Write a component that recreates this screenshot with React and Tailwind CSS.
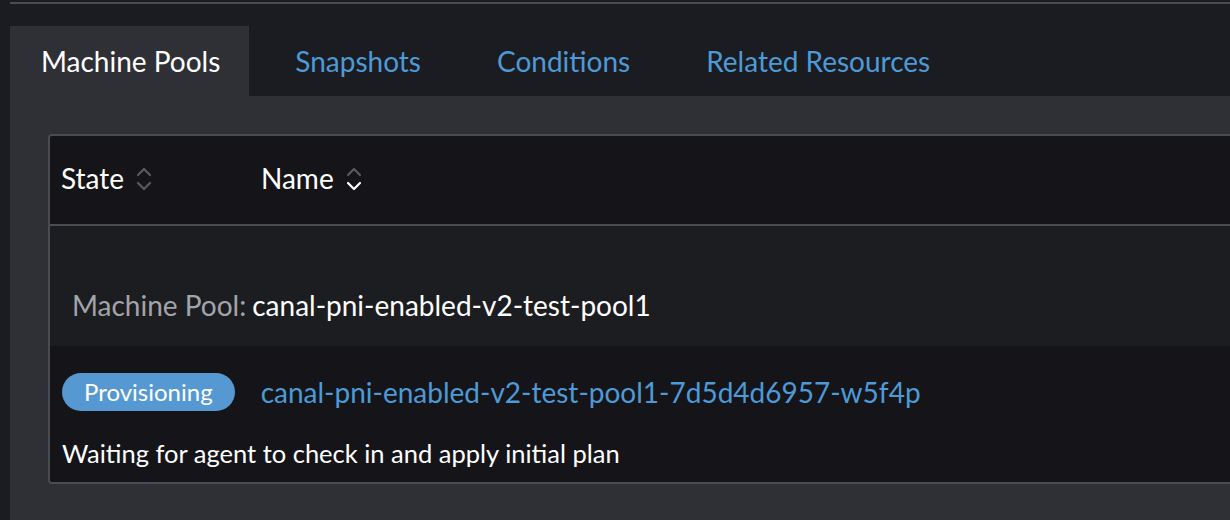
import React from "react";

function SortIcon({ active }) {
  return (
    <svg width="16" height="24" viewBox="0 0 16 24" fill="none" className="ml-[12px] mt-[2px]">
      <path d="M2 8 L8 2 L14 8" stroke="#5a5a60" strokeWidth="2.2" strokeLinecap="round" strokeLinejoin="round" />
      <path d="M2 16 L8 22 L14 16" stroke={active ? "#ffffff" : "#5a5a60"} strokeWidth="2.2" strokeLinecap="round" strokeLinejoin="round" />
    </svg>
  );
}

export default function App() {
  const tabs = ["Snapshots", "Conditions", "Related Resources"];

  return (
    <div className="w-[1230px] h-[520px] overflow-hidden bg-[#1b1c21] font-['Lato',sans-serif] flex flex-col">
      {/* top divider */}
      <div className="ml-[10px] mt-[2px] h-[2px] bg-[#4a4b51] shrink-0" />

      {/* tabs */}
      <div className="ml-[10px] mt-[22px] flex h-[70px] shrink-0 gap-[16px]">
        <div className="flex items-center bg-[#2f3036] pl-[31px] pr-[29px] text-[28px] text-white">Machine Pools</div>
        {tabs.map((t) => (
          <div key={t} className="flex items-center px-[30px] text-[28px] text-[#4d9ad7]">
            {t}
          </div>
        ))}
      </div>

      {/* panel */}
      <div className="ml-[10px] flex-1 bg-[#2f3036] pl-[38px] pt-[38px]">
        <div className="w-[1240px] rounded-[4px] border-2 border-[#4b4c52] overflow-hidden">
          {/* header */}
          <div className="flex h-[90px] items-center bg-[#151519] border-b-2 border-[#4b4c52] pl-[11px] pb-[4px] text-[28px] text-white">
            <div className="flex w-[200px] items-center">
              State
              <SortIcon />
            </div>
            <div className="flex items-center">
              Name
              <SortIcon active />
            </div>
          </div>

          {/* group row */}
          <div className="flex h-[120px] items-end bg-[#1c1d21] pb-[20px] pl-[22px] text-[28px]">
            <span className="text-[#a3a4aa]">Machine Pool:</span>
            <span className="ml-[6px] text-white">canal-pni-enabled-v2-test-pool1</span>
          </div>

          {/* row */}
          <div className="h-[136px] bg-[#151519] pl-[12px] pt-[25px]">
            <div className="flex items-center">
              <span className="flex h-[38px] items-center rounded-full bg-[#5699d2] px-[22px] text-[24px] text-white">
                Provisioning
              </span>
              <a className="ml-[26px] text-[28px] text-[#4d9ad7]">canal-pni-enabled-v2-test-pool1-7d5d4d6957-w5f4p</a>
            </div>
            <div className="mt-[21px] text-[25.5px] text-white">Waiting for agent to check in and apply initial plan</div>
          </div>
        </div>
      </div>
    </div>
  );
}
